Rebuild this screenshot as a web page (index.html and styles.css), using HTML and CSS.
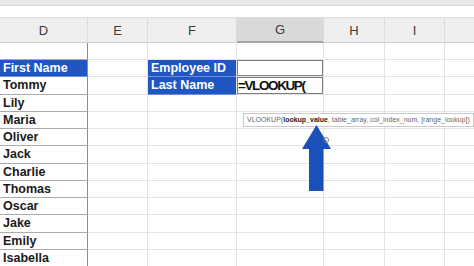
FILE: index.html
```html
<!DOCTYPE html>
<html lang="en">
<head>
  <meta charset="UTF-8">
  <title>VLOOKUP</title>
  <link rel="stylesheet" href="styles.css">
</head>
<body>
  <div class="ribbon"></div>
  <div class="formula-gap"></div>

  <div class="sheet">
    <div class="hd">D</div><div class="hd">E</div><div class="hd">F</div><div class="hd hd-sel">G</div><div class="hd">H</div><div class="hd">I</div><div class="hd"></div>

    <div class="c col-d"></div><div class="c"></div><div class="c"></div><div class="c"></div><div class="c"></div><div class="c"></div><div class="c"></div>

    <div class="c col-d head">First Name</div><div class="c"></div><div class="c head">Employee ID</div><div class="c boxed"></div><div class="c"></div><div class="c"></div><div class="c"></div>
    <div class="c col-d">Tommy</div><div class="c"></div><div class="c head">Last Name</div><div class="c boxed active">=VLOOKUP(</div><div class="c"></div><div class="c"></div><div class="c"></div>
    <div class="c col-d">Lily</div><div class="c"></div><div class="c"></div><div class="c"></div><div class="c"></div><div class="c"></div><div class="c"></div>
    <div class="c col-d">Maria</div><div class="c"></div><div class="c"></div><div class="c"></div><div class="c"></div><div class="c"></div><div class="c"></div>
    <div class="c col-d">Oliver</div><div class="c"></div><div class="c"></div><div class="c"></div><div class="c"></div><div class="c"></div><div class="c"></div>
    <div class="c col-d">Jack</div><div class="c"></div><div class="c"></div><div class="c"></div><div class="c"></div><div class="c"></div><div class="c"></div>
    <div class="c col-d">Charlie</div><div class="c"></div><div class="c"></div><div class="c"></div><div class="c"></div><div class="c"></div><div class="c"></div>
    <div class="c col-d">Thomas</div><div class="c"></div><div class="c"></div><div class="c"></div><div class="c"></div><div class="c"></div><div class="c"></div>
    <div class="c col-d">Oscar</div><div class="c"></div><div class="c"></div><div class="c"></div><div class="c"></div><div class="c"></div><div class="c"></div>
    <div class="c col-d">Jake</div><div class="c"></div><div class="c"></div><div class="c"></div><div class="c"></div><div class="c"></div><div class="c"></div>
    <div class="c col-d">Emily</div><div class="c"></div><div class="c"></div><div class="c"></div><div class="c"></div><div class="c"></div><div class="c"></div>
    <div class="c col-d">Isabella</div><div class="c"></div><div class="c"></div><div class="c"></div><div class="c"></div><div class="c"></div><div class="c"></div>

    <div class="tip">VLOOKUP(<b>lookup_value</b>, table_array, col_index_num, [range_lookup])</div>

    <svg class="arrow" width="30" height="67" viewBox="0 0 30 67">
      <path d="M14.5 0 L29 24 L21.5 24 L21.5 66 L7 66 L7 24 L0 24 Z" fill="#1b50b9"/>
    </svg>
    <span class="cursor"></span>
  </div>
</body>
</html>
```

FILE: styles.css
```css
body {
  margin: 0;
  width: 474px;
  height: 266px;
  overflow: hidden;
  background: #fff;
  font-family: "Liberation Sans", Arial, sans-serif;
}

.ribbon {
  height: 5px;
  background: #e8e8e8;
  border-bottom: 1px solid #dadada;
}

.formula-gap {
  height: 11px;
  border-bottom: 1px solid #dedede;
}

.sheet {
  position: relative;
  display: grid;
  grid-template-columns: 88px 60px 89px 87px 61px 60px 40px;
  grid-template-rows: 25px 17px;
  grid-auto-rows: 17.25px;
}

.hd {
  box-sizing: border-box;
  background: #efefef;
  border-right: 1px solid #dcdcdc;
  border-bottom: 1px solid #cfcfcf;
  display: flex;
  align-items: center;
  justify-content: center;
  font-size: 13px;
  color: #3c3c3c;
}

.hd-sel {
  background: #d9d9d9;
  border-bottom: 2px solid #a5a5a5;
}

.c {
  box-sizing: border-box;
  border-right: 1px solid #e4e4e4;
  border-bottom: 1px solid #e4e4e4;
  display: flex;
  align-items: center;
  padding-left: 3px;
  font-size: 12.5px;
  font-weight: bold;
  color: #1a1a1a;
  white-space: nowrap;
}

.col-d {
  border-right: 1px solid #8c8c8c;
  border-bottom: 1px solid #ababab;
}

.head {
  background: #1f56c3;
  color: #fff;
  border-bottom: 1px solid #6f8fd0;
}

.boxed {
  box-shadow: inset 0 0 0 1px #7c7c7c;
}

.active {
  padding-left: 1px;
  font-size: 13.5px;
  letter-spacing: -1.4px;
  color: #111;
}

.tip {
  position: absolute;
  left: 243px;
  top: 95px;
  height: 12px;
  padding: 0 3px;
  border: 1px solid #c9c9c9;
  background: #fff;
  font-size: 7px;
  line-height: 12px;
  color: #666;
  white-space: nowrap;
}

.tip b {
  color: #222;
}

.arrow {
  position: absolute;
  left: 302px;
  top: 107px;
}

.cursor {
  position: absolute;
  left: 323px;
  top: 119px;
  width: 4px;
  height: 4px;
  border: 1px solid #777;
  border-radius: 50%;
}
```
